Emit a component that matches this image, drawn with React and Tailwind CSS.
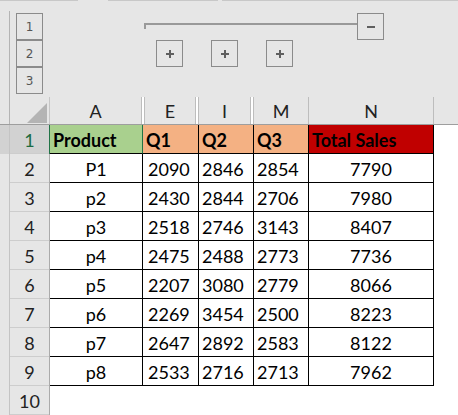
import React from "react";

const rows = [
  ["P1", 2090, 2846, 2854, 7790],
  ["p2", 2430, 2844, 2706, 7980],
  ["p3", 2518, 2746, 3143, 8407],
  ["p4", 2475, 2488, 2773, 7736],
  ["p5", 2207, 3080, 2779, 8066],
  ["p6", 2269, 3454, 2500, 8223],
  ["p7", 2647, 2892, 2583, 8122],
  ["p8", 2533, 2716, 2713, 7962],
];

function LevelBtn({ n }) {
  return (
    <div className="w-[27px] h-[27px] border border-[#8b8b8b] flex items-center justify-center text-[12px] text-[#555] font-['DejaVu_Sans',sans-serif]">
      {n}
    </div>
  );
}

function PlusBtn() {
  return (
    <div className="w-[27px] h-[27px] border border-[#8b8b8b] flex items-center justify-center">
      <svg width="8" height="8" viewBox="0 0 8 8">
        <rect x="0" y="3" width="8" height="2" fill="#5f5f5f" />
        <rect x="3" y="0" width="2" height="8" fill="#5f5f5f" />
      </svg>
    </div>
  );
}

function Marker() {
  return (
    <div className="flex h-full shrink-0">
      <div className="w-px bg-[#bdbdbd]" />
      <div className="w-[2px] bg-white" />
      <div className="w-px bg-[#bdbdbd]" />
    </div>
  );
}

function RowHeader({ n, selected }) {
  return (
    <div
      className={
        "w-[50px] shrink-0 flex border-r " +
        (selected ? "bg-[#d2d2d2] border-[#217346]" : "bg-[#e6e6e6] border-[#ababab]")
      }
    >
      <div className="w-[9px] shrink-0" />
      <div className="w-px shrink-0 bg-[#c4c4c4]" />
      <div
        className={
          "flex-1 flex items-end justify-center pb-[3px] leading-[20px] border-b border-[#cdcdcd] " +
          (selected ? "text-[#1d6b40]" : "text-[#222]")
        }
      >
        {n}
      </div>
    </div>
  );
}

export default function App() {
  return (
    <div className="w-[458px] h-[415px] overflow-hidden bg-white font-['Lato',sans-serif] text-[18px] text-black">
      {/* top thin line */}
      <div className="flex h-px bg-[#e6e6e6]">
        <div className="w-[78px] bg-[#c8c8c8]" />
        <div className="w-[30px]" />
        <div className="w-[110px] bg-[#c8c8c8]" />
        <div className="w-[4px]" />
        <div className="flex-1 bg-[#c8c8c8]" />
      </div>

      {/* outline panel */}
      <div className="flex h-[96px] bg-[#e6e6e6]">
        <div className="w-[9px] shrink-0" />
        <div className="w-px shrink-0 bg-[#b4b4b4] mt-[10px]" />
        <div className="w-[6px] shrink-0" />
        <div className="flex flex-col mt-[12px]">
          <LevelBtn n="1" />
          <LevelBtn n="2" />
          <LevelBtn n="3" />
        </div>
        <div className="w-[101px] shrink-0" />
        <div className="flex flex-col mt-[12px]">
          <div className="flex items-start">
            <div className="w-[213px] h-[6px] mt-[10px] border-t-2 border-l-2 border-[#999]" />
            <div className="w-[27px] h-[27px] border border-[#8b8b8b] flex items-center justify-center">
              <div className="w-[8px] h-[2px] bg-[#5f5f5f]" />
            </div>
          </div>
          <div className="flex gap-[28px] ml-[12px]">
            <PlusBtn />
            <PlusBtn />
            <PlusBtn />
          </div>
        </div>
      </div>

      {/* column header row */}
      <div className="flex h-[28px] bg-[#e6e6e6] border-b border-[#9e9e9e] text-[#222]">
        <div className="w-[9px] shrink-0" />
        <div className="w-px shrink-0 bg-[#b4b4b4]" />
        <div className="w-[40px] shrink-0 border-r border-[#c6c6c6] flex items-end justify-end pr-[2px] pb-px">
          <svg width="20" height="20" viewBox="0 0 20 20">
            <polygon points="20,0 20,20 0,20" fill="#b4b4b4" />
          </svg>
        </div>
        <div className="w-[91px] shrink-0 flex items-end justify-center pb-[3px] leading-[20px]">A</div>
        <Marker />
        <div className="w-[50px] shrink-0 flex items-end justify-center pb-[3px] leading-[20px]">E</div>
        <Marker />
        <div className="w-[51px] shrink-0 flex items-end justify-center pb-[3px] leading-[20px]">I</div>
        <Marker />
        <div className="w-[55px] shrink-0 border-r border-[#bdbdbd] flex items-end justify-center pb-[3px] leading-[20px]">M</div>
        <div className="w-[125px] shrink-0 border-r border-[#bdbdbd] flex items-end justify-center pb-[3px] leading-[20px]">N</div>
        <div className="flex-1" />
      </div>

      {/* row 1 */}
      <div className="flex h-[29px]">
        <RowHeader n="1" selected />
        <div className="w-[93px] shrink-0 bg-[#a9d08e] border-r border-r-[#217346] border-b border-b-black flex items-end pl-[3px] pb-[3px] leading-[20px] font-bold">
          Product
        </div>
        <div className="w-[56px] shrink-0 bg-[#f4b183] border-r border-b border-black flex items-end pl-[3px] pb-[3px] leading-[20px] font-bold">
          Q1
        </div>
        <div className="w-[55px] shrink-0 bg-[#f4b183] border-r border-b border-black flex items-end pl-[3px] pb-[3px] leading-[20px] font-bold">
          Q2
        </div>
        <div className="w-[55px] shrink-0 bg-[#f4b183] border-r border-b border-black flex items-end pl-[3px] pb-[3px] leading-[20px] font-bold">
          Q3
        </div>
        <div className="w-[125px] shrink-0 bg-[#c00000] border-r border-b border-black flex items-end pl-[3px] pb-[3px] leading-[20px] font-bold">
          Total Sales
        </div>
        <div className="flex-1" />
      </div>

      {rows.map((r, i) => (
        <div key={i} className="flex h-[29px]">
          <RowHeader n={String(i + 2)} />
          <div className="w-[93px] shrink-0 border-r border-b border-black flex items-end justify-center pb-[3px] leading-[20px]">
            {r[0]}
          </div>
          <div className="w-[56px] shrink-0 border-r border-b border-black flex items-end pl-[5px] pb-[3px] leading-[20px]">
            {r[1]}
          </div>
          <div className="w-[55px] shrink-0 border-r border-b border-black flex items-end pl-[3px] pb-[3px] leading-[20px]">
            {r[2]}
          </div>
          <div className="w-[55px] shrink-0 border-r border-b border-black flex items-end pl-[3px] pb-[3px] leading-[20px]">
            {r[3]}
          </div>
          <div className="w-[125px] shrink-0 border-r border-b border-black flex items-end justify-center pb-[3px] leading-[20px]">
            {r[4]}
          </div>
          <div className="flex-1" />
        </div>
      ))}

      {/* row 10 */}
      <div className="flex h-[29px]">
        <RowHeader n="10" />
        <div className="flex-1" />
      </div>
    </div>
  );
}
